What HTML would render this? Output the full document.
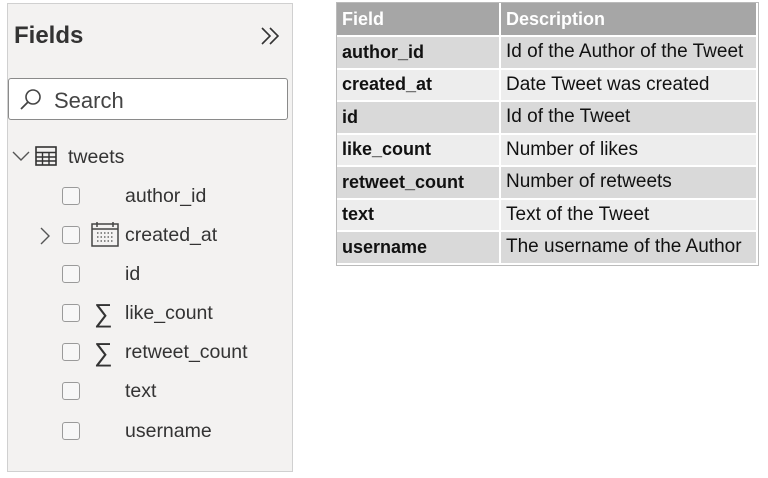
<!DOCTYPE html>
<html><head><style>
body{margin:0;width:768px;height:478px;background:#fff;position:relative;overflow:hidden;font-family:"Liberation Sans",sans-serif;}
.panel{position:absolute;left:7px;top:3px;width:286px;height:469px;background:#f3f2f1;border:1px solid #d0d0d0;box-sizing:border-box;}
.t{position:absolute;color:#252423;white-space:nowrap;}
.cb{position:absolute;left:62px;width:18px;height:18px;border:1px solid #9a9a9a;border-radius:3px;box-sizing:border-box;background:#f7f7f7;}
.lbl{position:absolute;left:125px;font-size:19.5px;color:#333;line-height:20px;white-space:nowrap;}
.sig{position:absolute;left:94px;font-size:26px;color:#333;line-height:24px;}
table{position:absolute;left:337px;top:3px;border-collapse:collapse;font-size:19px;outline:1px solid #bbb;}
td{height:32.5px;padding:0 5px;border-right:2px solid #fff;border-bottom:2px solid #fff;color:#111;box-sizing:border-box;white-space:nowrap;}
td:first-child{width:163px;font-weight:bold;font-size:18px;}
td:last-child{width:257px;}
tr.h td{background:#a6a6a6;color:#fff;font-weight:bold;height:33px;font-size:18px;}
tr.d td{background:#d9d9d9;}
tr.l td{background:#ededed;}
</style></head><body>
<div class="panel"></div>
<div class="t" style="left:14px;top:22px;font-size:24px;font-weight:bold;color:#333;">Fields</div>
<svg style="position:absolute;left:260px;top:26px" width="22" height="20"><path d="M2 2l8 8-8 8M10 2l8 8-8 8" fill="none" stroke="#333" stroke-width="1.6"/></svg>
<div style="position:absolute;left:8px;top:78px;width:280px;height:42px;background:#fff;border:1px solid #8a8a8a;border-radius:3px;box-sizing:border-box;"></div>
<svg style="position:absolute;left:19px;top:88px" width="26" height="24"><circle cx="14" cy="9" r="7" fill="none" stroke="#444" stroke-width="1.6"/><path d="M9 14L2 21" stroke="#444" stroke-width="1.8"/></svg>
<div class="t" style="left:54px;top:88px;font-size:22px;color:#444;">Search</div>
<svg style="position:absolute;left:12px;top:150px" width="20" height="14"><path d="M1 2l8 8 8-8" fill="none" stroke="#555" stroke-width="1.4"/></svg>
<svg style="position:absolute;left:35px;top:146px" width="22" height="20"><rect x="1" y="1" width="20" height="18" fill="none" stroke="#333" stroke-width="1.6"/><path d="M1 6.5h20M1 11h20M1 15h20M7.5 6v13M14 6v13" stroke="#333" stroke-width="1.4"/></svg>
<div class="t" style="left:68px;top:146px;font-size:19.5px;color:#333;">tweets</div>
<div class="cb" style="top:187px"></div><div class="lbl" style="top:186px">author_id</div>
<svg style="position:absolute;left:38px;top:226px" width="14" height="20"><path d="M3 2l8 8-8 8" fill="none" stroke="#555" stroke-width="1.4"/></svg>
<div class="cb" style="top:226px"></div>
<svg style="position:absolute;left:91px;top:221px" width="28" height="26"><rect x="1" y="3" width="26" height="22" fill="none" stroke="#444" stroke-width="1.5"/><path d="M1 8h26M6 1v5M22 1v5" stroke="#444" stroke-width="1.5"/><path d="M6 12h16M6 16h16M6 20h16" stroke="#666" stroke-width="1.4" stroke-dasharray="1.5 2"/></svg>
<div class="lbl" style="top:225px">created_at</div>
<div class="cb" style="top:265px"></div><div class="lbl" style="top:264px">id</div>
<div class="cb" style="top:304px"></div><div class="sig" style="top:301px">∑</div><div class="lbl" style="top:303px">like_count</div>
<div class="cb" style="top:343px"></div><div class="sig" style="top:340px">∑</div><div class="lbl" style="top:342px">retweet_count</div>
<div class="cb" style="top:382px"></div><div class="lbl" style="top:381px">text</div>
<div class="cb" style="top:422px"></div><div class="lbl" style="top:421px">username</div>
<table>
<tr class="h"><td>Field</td><td>Description</td></tr>
<tr class="d"><td>author_id</td><td>Id of the Author of the Tweet</td></tr>
<tr class="l"><td>created_at</td><td>Date Tweet was created</td></tr>
<tr class="d"><td>id</td><td>Id of the Tweet</td></tr>
<tr class="l"><td>like_count</td><td>Number of likes</td></tr>
<tr class="d"><td>retweet_count</td><td>Number of retweets</td></tr>
<tr class="l"><td>text</td><td>Text of the Tweet</td></tr>
<tr class="d"><td>username</td><td>The username of the Author</td></tr>
</table>
</body></html>
